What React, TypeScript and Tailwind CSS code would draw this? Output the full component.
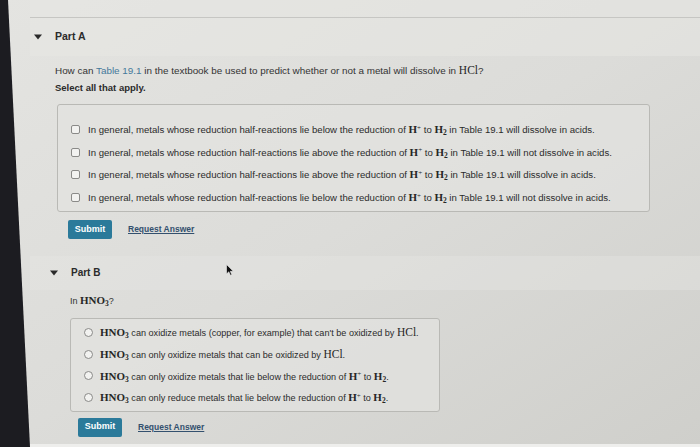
import React from "react";

const partAOptions = [
  { pos: "below", result: "will dissolve in acids." },
  { pos: "above", result: "will not dissolve in acids." },
  { pos: "above", result: "will dissolve in acids." },
  { pos: "below", result: "will not dissolve in acids." },
];

function Hplus() {
  return (
    <span className="font-['Liberation_Serif',serif] text-[11px] font-bold text-[#262626]">
      H<sup className="text-[7px] font-normal">+</sup>
    </span>
  );
}

function H2() {
  return (
    <span className="font-['Liberation_Serif',serif] text-[11px] font-bold text-[#262626]">
      H<sub className="text-[7.5px]">2</sub>
    </span>
  );
}

function HNO3() {
  return (
    <span className="font-['Liberation_Serif',serif] text-[11px] font-bold text-[#262626]">
      HNO<sub className="text-[7.5px]">3</sub>
    </span>
  );
}

function HCl() {
  return <span className="font-['Liberation_Serif',serif] text-[11.5px] text-[#262626]">HCl</span>;
}

function Caret() {
  return (
    <svg width="8" height="6" viewBox="0 0 8 6" className="shrink-0">
      <path d="M0 0.5 L8 0.5 L4 5.5 Z" fill="#2a2a2a" />
    </svg>
  );
}

function Actions() {
  return (
    <div className="flex items-center gap-4">
      <button
        type="button"
        className="h-[19px] w-[44px] rounded-[2px] bg-[#2b7a9a] text-[9px] font-bold text-white"
      >
        Submit
      </button>
      <span className="text-[8.5px] font-bold text-[#33506e] underline">Request Answer</span>
    </div>
  );
}

export default function App() {
  return (
    <div className="relative flex h-[447px] w-[700px] overflow-hidden bg-gradient-to-br from-[#e4e4e1] via-[#dcdcd9] to-[#cfcfcb] font-['Liberation_Sans',Arial,sans-serif] text-[#2b2b2b]">
      <div className="w-[30px] shrink-0 bg-[#1c1c21] [clip-path:polygon(0_0,8px_0,30px_100%,0_100%)]" />

      <div className="flex flex-1 flex-col">
        <div className="h-[17px] shrink-0 bg-[#e6e6e3]/60" />

        {/* Part A */}
        <div className="border-t border-[#c6c6c3]">
          <div className="flex h-[38px] items-center gap-[13px] bg-[#e7e7e4]/50 pl-[4px]">
            <Caret />
            <span className="text-[10.5px] font-bold text-[#2b2b2b]">Part A</span>
          </div>

          <div className="pl-[25px] pt-[6px]">
            <p className="text-[9.9px] leading-[16px] text-[#333]">
              How can <span className="text-[#45799b]">Table 19.1</span> in the textbook be used to predict whether or
              not a metal will dissolve in <HCl />?
            </p>
            <p className="mt-[1px] text-[9.5px] font-bold leading-[16px] text-[#2b2b2b]">Select all that apply.</p>

            <div className="ml-[2px] mt-[8px] w-[593px] rounded-[3px] border border-[#b9b9b5] bg-[#e2e2df]/70 pb-[2px] pt-[13px]">
              {partAOptions.map((o, i) => (
                <div key={i} className="flex h-[22.7px] items-center gap-[8px] pl-[13px]">
                  <span className="h-[9px] w-[9px] shrink-0 rounded-[2px] border border-[#8a8a88] bg-[#f2f2f0]" />
                  <span className="whitespace-nowrap text-[9.6px] text-[#2b2b2b]">
                    In general, metals whose reduction half-reactions lie {o.pos} the reduction of <Hplus /> to{" "}
                    <H2 /> in Table 19.1 {o.result}
                  </span>
                </div>
              ))}
            </div>

            <div className="ml-[13px] mt-[8px]">
              <Actions />
            </div>
          </div>
        </div>

        {/* Part B */}
        <div className="mt-[17px]">
          <div className="flex h-[34px] items-center gap-[13px] bg-[#e7e7e4]/40 pl-[20px]">
            <Caret />
            <span className="text-[10px] font-bold text-[#2b2b2b]">Part B</span>
          </div>

          <div className="pl-[40px] pt-[2px]">
            <p className="text-[9px] leading-[16px] text-[#333]">
              In <HNO3 />?
            </p>

            <div className="mt-[9px] w-[370px] rounded-[3px] border border-[#b9b9b5] bg-[#e2e2df]/70 pb-[2px] pt-[3px]">
              {[
                <>
                  <HNO3 /> can oxidize metals (copper, for example) that can't be oxidized by <HCl />.
                </>,
                <>
                  <HNO3 /> can only oxidize metals that can be oxidized by <HCl />.
                </>,
                <>
                  <HNO3 /> can only oxidize metals that lie below the reduction of <Hplus /> to <H2 />.
                </>,
                <>
                  <HNO3 /> can only reduce metals that lie below the reduction of <Hplus /> to <H2 />.
                </>,
              ].map((c, i) => (
                <div key={i} className="flex h-[21.7px] items-center gap-[7px] pl-[13px]">
                  <span className="h-[9px] w-[9px] shrink-0 rounded-full border border-[#8a8a88] bg-[#f2f2f0]" />
                  <span className="whitespace-nowrap text-[9.1px] text-[#2b2b2b]">{c}</span>
                </div>
              ))}
            </div>

            <div className="ml-[8px] mt-[6px]">
              <Actions />
            </div>
          </div>
        </div>

        <div className="flex-1" />
        <div className="h-[3px] shrink-0 bg-[#eeeeec]" />
      </div>

      <svg
        width="8"
        height="12"
        viewBox="0 0 8 12"
        className="pointer-events-none absolute left-[226px] top-[264px]"
      >
        <path d="M0.5 0.5 L0.5 10 L2.8 7.8 L4.4 11.3 L5.8 10.7 L4.3 7.3 L7.3 7.3 Z" fill="#111" stroke="#eee" strokeWidth="0.6" />
      </svg>
    </div>
  );
}
